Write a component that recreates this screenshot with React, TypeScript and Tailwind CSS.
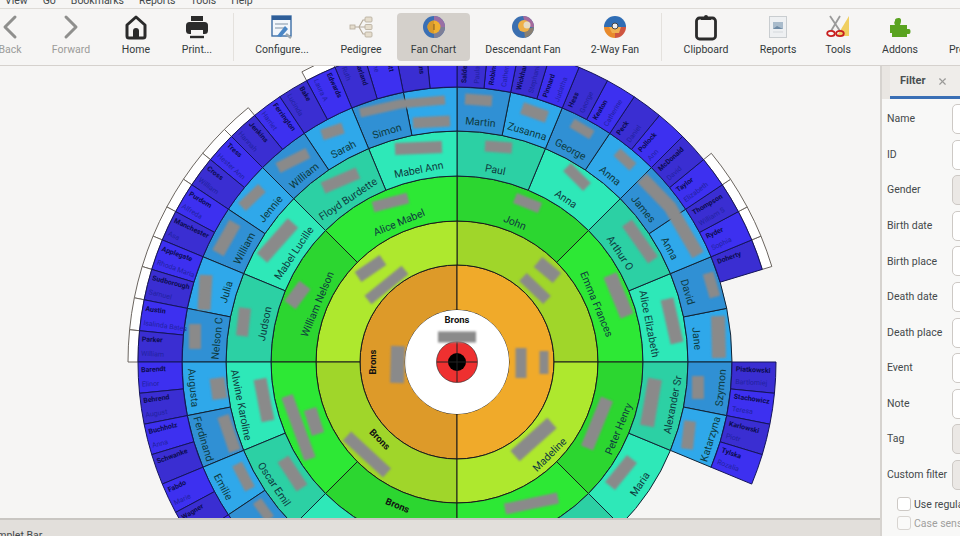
import { ChevronLeft, ChevronRight, X } from "lucide-react";

const CX = 457;
const CY = 362;

const pt = (r: number, a: number) => {
  const t = (a * Math.PI) / 180;
  return [CX + r * Math.cos(t), CY - r * Math.sin(t)];
};

const segPath = (r0: number, r1: number, a0: number, a1: number) => {
  const [x0, y0] = pt(r0, a0);
  const [x1, y1] = pt(r1, a0);
  const [x2, y2] = pt(r1, a1);
  const [x3, y3] = pt(r0, a1);
  const large = a1 - a0 > 180 ? 1 : 0;
  return `M${x0} ${y0}L${x1} ${y1}A${r1} ${r1} 0 ${large} 0 ${x2} ${y2}L${x3} ${y3}A${r0} ${r0} 0 ${large} 1 ${x0} ${y0}Z`;
};

type Ring = { r0: number; r1: number; light: string; dark: string; stroke: string };

const rings: Ring[] = [
  { r0: 52, r1: 97, light: "#f0aa2a", dark: "#dd9a29", stroke: "#1a1a1a" },
  { r0: 97, r1: 141, light: "#aee82e", dark: "#a0d62a", stroke: "#1a1a1a" },
  { r0: 141, r1: 186, light: "#2de835", dark: "#2cd630", stroke: "#1a1a1a" },
  { r0: 186, r1: 231, light: "#2ee8b8", dark: "#2cd0a4", stroke: "#123" },
  { r0: 231, r1: 275, light: "#2fa8ea", dark: "#3090d4", stroke: "#123" },
  { r0: 275, r1: 319, light: "#3d30f0", dark: "#3a2ed2", stroke: "#14145a" },
];

// [ring, start angle, end angle, dark?]
const segs: [number, number, number, boolean][] = [];
segs.push([0, 90, 270, true], [0, -90, 90, false]);
segs.push([1, 0, 90, true], [1, 90, 180, false], [1, 180, 270, true], [1, 270, 360, false]);
for (let i = 0; i < 4; i++) segs.push([2, i * 45, (i + 1) * 45, i % 2 === 1]);
for (let i = 0; i < 4; i++) segs.push([2, 180 + i * 45, 180 + (i + 1) * 45, i % 2 === 1]);
for (let i = 0; i < 8; i++) segs.push([3, i * 22.5, (i + 1) * 22.5, i % 2 === 1]);
for (let i = 0; i < 8; i++) segs.push([3, 180 + i * 22.5, 180 + (i + 1) * 22.5, i % 2 === 1]);
for (let i = 0; i < 16; i++) segs.push([4, i * 11.25, (i + 1) * 11.25, i % 2 === 1]);
for (let i = 0; i < 4; i++) segs.push([4, 180 + i * 11.25, 180 + (i + 1) * 11.25, i % 2 === 1]);
segs.push([4, -11.25, 0, true], [4, -22.5, -11.25, false]);
for (let i = 3; i < 32; i++) segs.push([5, i * 5.625, (i + 1) * 5.625, i % 2 === 1]);
for (let i = 0; i < 8; i++) segs.push([5, 180 + i * 5.625, 180 + (i + 1) * 5.625, i % 2 === 1]);
for (let i = 0; i < 4; i++) segs.push([5, -(i + 1) * 5.625, -i * 5.625, i % 2 === 0]);

const whiteBoxes: number[] = [16.875, 22.5, 28.125, 33.75, 112.5, 129.375, 135, 140.625, 146.25, 151.875, 157.5, 163.125, 168.75, 174.375];

// [text, angle, radius]
const names: [string, number, number][] = [
  ["Jane", 5.6, 241], ["David", 16.9, 241], ["Anna", 28.1, 241], ["James", 39.4, 241],
  ["Anna", 50.6, 241], ["George", 61.9, 241], ["Zusanna", 73.1, 241], ["Martin", 84.4, 241],
  ["Simon", 106.9, 241], ["Sarah", 118.1, 241], ["William", 129.4, 241], ["Jennie", 140.6, 241],
  ["William", 151.9, 241], ["Julia", 163.1, 241], ["Nelson C", 174.4, 241],
  ["Alice Elizabeth", 11.25, 196], ["Arthur O", 33.75, 196], ["Anna", 56.25, 196], ["Paul", 78.75, 196],
  ["Mabel Ann", 101.25, 196], ["Floyd Burdette", 123.75, 196], ["Mabel Lucille", 146.25, 196], ["Judson", 168.75, 196],
  ["Emma Frances", 22.5, 151], ["John", 67.5, 151], ["Alice Mabel", 112.5, 151], ["William Nelson", 157.5, 151],
  ["Augusta", 185.6, 265], ["Ferdinand", 196.9, 265], ["Emilie", 208.1, 265],
  ["Szymon", -5.6, 265], ["Katarzyna", -16.9, 265],
  ["Alwine Karoline", 191.25, 220], ["Oscar Emil", 213.75, 220],
  ["Alexander Sr", -11.25, 220], ["Maria", -33.75, 220],
  ["Peter Henry", -22.5, 175], ["Madeline", -45, 131],
];

const bolds: [string, number, number][] = [
  ["Brons", 180, 85], ["Brons", 225, 109], ["Brons", 247.5, 155],
];

// [surname, given, segment middle angle]
const outer: [string, string, number][] = [
  ["Doherty", "", 19.7], ["Ryder", "Sophia", 25.3], ["Thompson", "William S", 30.9], ["Taylor", "Elizabeth", 36.6],
  ["McDonald", "David", 42.2], ["Pollock", "Ann", 47.8], ["Peck", "Daniel", 53.4], ["Keaton", "Catherine", 59.1],
  ["Hess", "George", 64.7], ["Pinnard", "Judatha", 70.3], ["Wickham", "Stephanie", 75.9], ["Robinson", "Catherine", 81.6],
  ["Salder", "Paula", 87.2], ["Brown", "Ellen", 92.8], ["Hopkins", "Mary", 98.4], ["Elliott", "Jane", 104.1],
  ["Garland", "Ruth", 109.7], ["Edwards", "Laura A", 115.3], ["Bake", "Lucinda", 120.9], ["Ferrington", "Harriet", 126.6],
  ["Jenkins", "Hannah", 132.2], ["Tress", "Hester Ann", 137.8], ["Cross", "William", 143.4], ["Purdom", "Alfreda", 149.1],
  ["Manchester", "Asa", 154.7], ["Applegate", "Rhoda Maria", 160.3], ["Sudborough", "Samuel", 165.9],
  ["Austin", "Isalinda Bates", 171.6], ["Parker", "William", 177.2],
  ["Barendt", "Elinor", 182.8], ["Behrend", "August", 188.4], ["Buchholz", "Anna", 194.1], ["Schwanke", "", 199.7],
  ["Fabdo", "Marie", 205.3], ["Wagner", "", 210.9],
  ["Piatkowski", "Bartlomiej", -2.8], ["Stachowicz", "Teresa", -8.4], ["Karlowski", "Piotr", -14.1], ["Tylska", "Rozalia", -19.7],
];

// grey scribbles that hide the names in the picture: [points, width]
const smudges: [string, number][] = [
  ["360,113 400,104 445,100", 9], ["413,123 450,121", 11], ["322,135 343,128", 11], ["278,168 308,153", 11],
  ["242,207 262,188", 11], ["218,253 235,223", 13], ["206,275 204,310", 13], ["323,188 358,173", 12],
  ["395,149 442,147", 12], ["373,207 408,198", 11], ["262,258 293,223", 14], ["358,277 383,260", 12],
  ["368,300 405,270", 11], ["290,305 305,285", 14], ["195,324 195,349", 12], ["245,308 242,336", 12],
  ["398,346 397,383", 14], ["217,378 220,399", 15], ["260,379 268,421", 13], ["287,396 310,459", 12],
  ["310,409 318,434", 13], ["223,416 235,451", 12], ["237,464 250,489", 11], ["283,459 302,488", 13],
  ["347,436 387,473", 12], ["257,501 270,519", 10], ["610,275 627,316", 14], ["667,299 677,343", 13],
  ["718,316 719,358", 14], ["521,348 521,378", 11], ["544,351 544,374", 9], ["698,376 698,399", 12],
  ["655,379 647,426", 14], ["690,421 687,449", 12], ["607,399 587,448", 13], ["552,423 515,456", 14],
  ["632,459 610,486", 13], ["558,498 505,509", 11], ["465,99 492,101", 11], ["522,108 547,117", 12],
  ["572,123 592,135", 10], ["617,152 633,167", 10], ["485,146 512,148", 11], ["567,167 587,187", 11],
  ["642,178 670,207 698,255", 13], ["627,223 653,260", 12], ["515,198 540,208", 11], ["538,262 557,278", 13],
  ["523,277 547,300", 11], ["708,273 715,297", 11], ["438,337 476,337", 11],
];

const tangent = (a: number) => (a >= 0 && a <= 180 ? 90 - a : -90 - a);

const FanChart = () => (
  <svg viewBox="0 66 880 452" className="block w-[880px] h-[452px]">
    {whiteBoxes.map((a) => (
      <path key={a} d={segPath(319, 329, a, a + 5.625)} fill="#fff" stroke="#6b655f" strokeWidth={1} />
    ))}
    {segs.map(([ring, a0, a1, dark], i) => {
      const r = rings[ring];
      return (
        <path key={i} d={segPath(r.r0, r.r1, a0, a1)} fill={dark ? r.dark : r.light} stroke={r.stroke} strokeWidth={1} />
      );
    })}
    <circle cx={CX} cy={CY} r={52} fill="#fff" />
    <circle cx={CX} cy={CY} r={20.5} fill="#ee3030" stroke="#222" strokeWidth={0.6} />
    <circle cx={CX} cy={CY} r={9} fill="#000" />
    <path d={`M${CX - 20} ${CY}H${CX + 20}M${CX} ${CY - 20}V${CY + 20}`} stroke="#222" strokeWidth={1} />

    {outer.map(([sur, given, a], i) => {
      const left = a > 90 && a < 270;
      const r = left ? 316 : 279;
      const rot = left ? 180 - a : -a;
      const off = left ? -1.3 : 1.3;
      const [x0, y0] = pt(r, a + off);
      const [x1, y1] = pt(r, a - off);
      return (
        <g key={i} fontSize={7}>
          <text x={x0} y={y0} transform={`rotate(${rot} ${x0} ${y0})`} dominantBaseline="central" fontWeight={700} fill="#0c0c50">
            {sur}
          </text>
          {given && (
            <text x={x1} y={y1} transform={`rotate(${rot} ${x1} ${y1})`} dominantBaseline="central" fill="#2222a0">
              {given}
            </text>
          )}
        </g>
      );
    })}

    <g className="blur-[1px]">
      {smudges.map(([points, w], i) => (
        <polyline key={i} points={points} fill="none" stroke="#8a8a8a" strokeWidth={w} strokeLinecap="butt" strokeLinejoin="round" />
      ))}
    </g>

    {names.map(([text, a, r], i) => {
      const [x, y] = pt(r, a);
      return (
        <text key={i} x={x} y={y} transform={`rotate(${tangent(a)} ${x} ${y})`} textAnchor="middle" dominantBaseline="central" fontSize={10.5} fill="#0e3b3f">
          {text}
        </text>
      );
    })}
    {bolds.map(([text, a, r], i) => {
      const [x, y] = pt(r, a);
      return (
        <text key={i} x={x} y={y} transform={`rotate(${tangent(a)} ${x} ${y})`} textAnchor="middle" dominantBaseline="central" fontSize={9.5} fontWeight={700} fill="#111">
          {text}
        </text>
      );
    })}
    <text x={457} y={319} textAnchor="middle" dominantBaseline="central" fontSize={9.5} fontWeight={700} fill="#111">
      Brons
    </text>
  </svg>
);

const HomeIcon = () => (
  <svg width="24" height="26" viewBox="0 0 24 26">
    <path d="M12 3 3 11v11a2 2 0 0 0 2 2h14a2 2 0 0 0 2-2V11z" fill="none" stroke="#2b2b2b" strokeWidth="3" strokeLinejoin="round" />
    <path d="M9 24v-7a3 3 0 0 1 6 0v7z" fill="#2b2b2b" />
  </svg>
);

const PrintIcon = () => (
  <svg width="24" height="24" viewBox="0 0 24 24">
    <path d="M6 1h12v5H6z" fill="#2b2b2b" />
    <rect x="1" y="7" width="22" height="12" rx="3.5" fill="#2b2b2b" />
    <rect x="6" y="15" width="12" height="5" fill="#f6f5f4" />
    <path d="M5 22h14" stroke="#2b2b2b" strokeWidth="2.4" />
  </svg>
);

const ConfigureIcon = () => (
  <svg width="24" height="26" viewBox="0 0 24 26">
    <rect x="2" y="2" width="19" height="20" fill="#f2f6fb" stroke="#3c6ea5" strokeWidth="1.4" />
    <rect x="2" y="2" width="19" height="4" fill="#2f5e98" />
    <path d="M5 10h13M5 14h10" stroke="#b8c4d0" strokeWidth="2" />
    <path d="M7 22 15 12l3 3-7 8z" fill="#4a86c5" />
    <path d="M16 20l5 4" stroke="#9aa5ad" strokeWidth="2.5" />
  </svg>
);

const PedigreeIcon = () => (
  <svg width="24" height="24" viewBox="0 0 24 24" fill="#e5ddcd" stroke="#b5ab9b" strokeWidth="0.8">
    <path d="M4 12h6M10 12 14 5h2M10 12l4 7h2M10 12h6" fill="none" strokeWidth="1.2" />
    <rect x="1" y="10" width="5" height="4" />
    <rect x="16" y="2" width="7" height="5" rx="1" />
    <rect x="16" y="9.5" width="7" height="5" rx="1" />
    <rect x="16" y="17" width="7" height="5" rx="1" />
  </svg>
);

const FanIcon = () => (
  <svg width="24" height="24" viewBox="0 0 24 24">
    <circle cx="12" cy="12" r="11" fill="#3a6fb4" />
    <path d="M12 1a11 11 0 0 1 11 11H12z" fill="#9a6fa5" />
    <path d="M12 23a11 11 0 0 0 11-11H12z" fill="#7d7f98" />
    <circle cx="12" cy="12" r="6.5" fill="#f0b030" />
    <path d="M12 5.5a6.500 6.500 0 0 0 0 13z" fill="#d99a2c" />
    <path d="M12 9v6" stroke="#6b4a20" strokeWidth="0.8" />
  </svg>
);

const DescendantIcon = () => (
  <svg width="24" height="24" viewBox="0 0 24 24">
    <circle cx="12" cy="12" r="11" fill="#3b6fb0" />
    <path d="M12 1a11 11 0 0 1 11 11H15z" fill="#a56a9c" />
    <path d="M23 12a11 11 0 0 1-9 10.800L13 15z" fill="#8a8072" />
    <circle cx="13" cy="11" r="6" fill="#eeb048" />
    <circle cx="16" cy="10" r="3.500" fill="#e6dcc4" />
  </svg>
);

const TwoWayIcon = () => (
  <svg width="24" height="24" viewBox="0 0 24 24">
    <path d="M1 12a11 11 0 0 1 22 0z" fill="#2f6db5" />
    <path d="M1 12h11v11A11 11 0 0 1 1 12z" fill="#e88a2c" />
    <path d="M12 12h11a11 11 0 0 1-11 11z" fill="#cf5540" />
    <path d="M6 12h12l-2 6H9z" fill="#f0b050" />
    <circle cx="12" cy="11" r="3" fill="#eee" stroke="#444" />
  </svg>
);

const ClipboardIcon = () => (
  <svg width="24" height="28" viewBox="0 0 24 28">
    <rect x="2.500" y="5" width="19" height="21" rx="3" fill="none" stroke="#2b2b2b" strokeWidth="2.800" />
    <path d="M7 7V4h3a2 2 0 0 1 4 0h3v3z" fill="#2b2b2b" />
  </svg>
);

const ReportsIcon = () => (
  <svg width="18" height="22" viewBox="0 0 18 22">
    <rect x="0.500" y="0.500" width="17" height="21" fill="#eef0f2" stroke="#c9cdd0" />
    <rect x="4" y="6" width="10" height="7" fill="#a9bbcb" />
    <path d="M4 13l4-3 6 3z" fill="#6f8ba5" />
    <path d="M4 16h10" stroke="#d4d8dc" />
  </svg>
);

const ToolsIcon = () => (
  <svg width="24" height="24" viewBox="0 0 24 24">
    <path d="M23 1v20H11z" fill="#f0cf60" />
    <path d="M4 1l10 15M14 1 5 16" stroke="#9a9a9a" strokeWidth="1.800" />
    <ellipse cx="5" cy="18.500" rx="3.800" ry="2.600" fill="none" stroke="#c81e1e" strokeWidth="1.800" />
    <ellipse cx="14" cy="18.500" rx="3.800" ry="2.600" fill="none" stroke="#c81e1e" strokeWidth="1.800" />
  </svg>
);

const AddonsIcon = () => (
  <svg width="22" height="22" viewBox="0 0 22 22">
    <path d="M1 9h5c-1-2-1-3 0-4V4c0-2 6-3 6 0v1c0 2-1 3-1 4h7v4h2c2 0 2 5 0 5h-2v3H3v-4H1z" fill="#5aa320" />
  </svg>
);

const Tool = ({ className, text, muted, children }: { className: string; text: string; muted?: boolean; children?: React.ReactNode }) => (
  <div className={`shrink-0 h-[48px] flex flex-col items-center rounded-[4px] ${className}`}>
    <div className="shrink-0 h-[28px] flex items-center justify-center">{children}</div>
    <span className={`shrink-0 mt-[1px] text-[10.5px] leading-[16px] whitespace-nowrap ${muted ? "text-[#9b9b99]" : "text-[#33393b]"}`}>{text}</span>
  </div>
);

const Sep = ({ className }: { className: string }) => <div className={`shrink-0 w-px h-[48px] bg-[#e4e1dd] ${className}`} />;

const filterRows: [string, boolean][] = [
  ["Name", false], ["ID", false], ["Gender", true], ["Birth date", false], ["Birth place", false],
  ["Death date", false], ["Death place", false], ["Event", false], ["Note", false], ["Tag", true], ["Custom filter", true],
];

export default function App() {
  return (
    <div className="w-[960px] h-[536px] overflow-hidden flex flex-col bg-[#f6f5f4] font-['Roboto',sans-serif] text-[#33393b]">
      {/* menu bar, cut by the top of the window */}
      <div className="shrink-0 h-[9px] overflow-hidden border-b border-[#dedbd7] flex gap-[15px] pl-[5px] text-[10.5px] leading-[10px] text-[#44494b]">
        <span className="-mt-[4px]">View</span>
        <span className="-mt-[4px]">Go</span>
        <span className="-mt-[4px]">Bookmarks</span>
        <span className="-mt-[4px]">Reports</span>
        <span className="-mt-[4px]">Tools</span>
        <span className="-mt-[4px]">Help</span>
      </div>

      {/* toolbar */}
      <div className="shrink-0 h-[57px] flex items-center border-b border-[#d5d1cd]">
        <Tool className="w-[64px] -ml-[22px]" text="Back" muted>
          <ChevronLeft size={40} strokeWidth={1.8} className="text-[#8f8f8d]" />
        </Tool>
        <Tool className="w-[58px]" text="Forward" muted>
          <ChevronRight size={40} strokeWidth={1.8} className="text-[#8f8f8d]" />
        </Tool>
        <Tool className="w-[72px]" text="Home"><HomeIcon /></Tool>
        <Tool className="w-[50px]" text="Print..."><PrintIcon /></Tool>
        <Sep className="ml-[11px] mr-[10px]" />
        <Tool className="w-[76px] mr-[5px]" text="Configure..."><ConfigureIcon /></Tool>
        <Tool className="w-[72px]" text="Pedigree"><PedigreeIcon /></Tool>
        <Tool className="w-[73px] bg-[#d4d0cb]" text="Fan Chart"><FanIcon /></Tool>
        <Tool className="w-[106px]" text="Descendant Fan"><DescendantIcon /></Tool>
        <Tool className="w-[78px]" text="2-Way Fan"><TwoWayIcon /></Tool>
        <Sep className="ml-[7px] mr-[6px]" />
        <Tool className="w-[76px]" text="Clipboard"><ClipboardIcon /></Tool>
        <Tool className="w-[68px]" text="Reports"><ReportsIcon /></Tool>
        <Tool className="w-[52px]" text="Tools"><ToolsIcon /></Tool>
        <Tool className="w-[72px]" text="Addons"><AddonsIcon /></Tool>
        <Tool className="w-[70px] ml-[13px] !items-start" text="Preferences" />
      </div>

      <div className="flex-1 min-h-0 flex">
        <div className="w-[880px] shrink-0 flex flex-col">
          <div className="h-[452px] overflow-hidden">
            <FanChart />
          </div>
          <div className="flex-1 min-h-0 overflow-hidden bg-[#e2dfdb] border-t-2 border-[#c9c6c2]">
            <div className="-ml-[19px] mt-[8px] text-[10.5px] leading-[16px] text-[#44494b] whitespace-nowrap">Gramplet Bar</div>
          </div>
        </div>

        {/* filter sidebar */}
        <div className="flex-1 min-w-0 overflow-hidden flex flex-col bg-[#f8f8f7] border-l-[2px] border-[#d6d3cf]">
          <div className="shrink-0 h-[33px] bg-[#e9e6e2] pl-[8px] flex">
            <div className="w-[72px] h-[33px] pt-[1px] bg-[#efedea] border-b-[3px] border-[#3a6fb5] pl-[10px] flex items-center gap-[11px]">
              <span className="text-[11px] font-bold text-[#4a4f51]">Filter</span>
              <X size={11} strokeWidth={2.5} className="text-[#9a9a98]" />
            </div>
          </div>
          <div className="pl-[5px] pt-[5px] flex flex-col gap-[5.6px]">
            {filterRows.map(([name, button]) => (
              <div key={name} className="flex items-center h-[30px]">
                <span className="w-[65px] shrink-0 text-[10.5px] text-[#44494b] whitespace-nowrap">{name}</span>
                <div className={`w-[30px] h-[30px] shrink-0 rounded-[5px] border border-[#cdc9c5] ${button ? "bg-[#ebe8e5]" : "bg-white"}`} />
              </div>
            ))}
          </div>
          <div className="pl-[15px] pt-[7px] flex flex-col gap-[4px]">
            <div className="flex items-center gap-[3px] h-[15px]">
              <div className="w-[14px] h-[14px] shrink-0 rounded-[3px] border border-[#cdc9c5] bg-white" />
              <span className="text-[10.5px] text-[#44494b] whitespace-nowrap">Use regular expressions</span>
            </div>
            <div className="flex items-center gap-[3px] h-[15px]">
              <div className="w-[14px] h-[14px] shrink-0 rounded-[3px] border border-[#d8d5d1] bg-[#fafaf9]" />
              <span className="text-[10.5px] text-[#a0a09e] whitespace-nowrap">Case sensitive</span>
            </div>
          </div>
        </div>
      </div>
    </div>
  );
}
